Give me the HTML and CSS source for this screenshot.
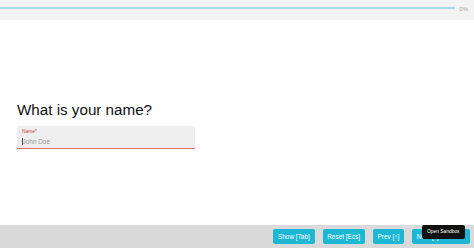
FILE: index.html
```html
<!DOCTYPE html>
<html>
<head>
<meta charset="utf-8">
<link rel="stylesheet" href="styles.css">
</head>
<body>
<div class="page">
  <header class="topbar">
    <div class="progress"></div>
    <span class="percent">0%</span>
  </header>
  <main class="content">
    <h1 class="question">What is your name?</h1>
    <div class="field">
      <label class="field-label">Name*</label>
      <div class="field-input"><span class="caret"></span><span class="placeholder">John Doe</span></div>
    </div>
  </main>
  <footer class="bottombar">
    <button class="btn">Show [Tab]</button>
    <button class="btn">Reset [Ecs]</button>
    <button class="btn">Prev [↑]</button>
    <div class="btn-wrap">
      <button class="btn btn-next">Next [↓]</button>
      <div class="tooltip">Open Sandbox</div>
    </div>
  </footer>
</div>
</body>
</html>
```
FILE: styles.css
```css
html, body {
  margin: 0;
  padding: 0;
  background: #ffffff;
}
body {
  font-family: "Liberation Sans", Arial, sans-serif;
  color: #111;
}
.page {
  width: 474px;
  height: 248px;
  display: flex;
  flex-direction: column;
}
.topbar {
  height: 20px;
  background: #f3f3f3;
  display: flex;
  align-items: flex-start;
  padding-top: 7px;
  box-sizing: border-box;
  gap: 4px;
}
.progress {
  flex: 1;
  height: 2px;
  background: #a9dbe6;
}
.percent {
  font-size: 6px;
  line-height: 4px;
  margin-top: -0.5px;
  color: #a5a5a5;
  margin-right: 6px;
}
.content {
  flex: 1;
  padding: 81px 0 0 17px;
}
.question {
  margin: 0 0 7px 0;
  font-size: 15.2px;
  line-height: 18px;
  font-weight: 400;
  color: #111;
}
.field {
  width: 178px;
  height: 22.5px;
  background: #eeeeee;
  border-bottom: 1.5px solid #d76d6d;
  border-radius: 2px 2px 0 0;
  padding: 3px 0 0 5px;
  box-sizing: border-box;
}
.field-label {
  display: block;
  font-size: 4.9px;
  line-height: 6px;
  color: #c9484a;
}
.field-input {
  display: flex;
  align-items: center;
  margin-top: 2px;
  height: 9px;
}
.caret {
  width: 0.6px;
  height: 7px;
  background: #444;
}
.placeholder {
  font-size: 6.4px;
  color: #9a9a9a;
}
.bottombar {
  height: 23px;
  background: #dadada;
  display: flex;
  align-items: center;
  justify-content: flex-end;
  gap: 8px;
  padding-right: 4px;
}
.btn {
  height: 15px;
  padding: 0 4.7px;
  border: none;
  border-radius: 2px;
  background: #1bb7d4;
  color: #ffffff;
  font-family: "Liberation Sans", Arial, sans-serif;
  font-size: 6.45px;
  line-height: 15px;
  margin: 0;
  white-space: nowrap;
  display: block;
}
.btn-wrap {
  position: relative;
}
.btn-next {
  width: 58px;
  text-align: left;
}
.tooltip {
  position: absolute;
  left: 9.5px;
  top: -4px;
  width: 43.5px;
  height: 14px;
  background: #111111;
  color: #ffffff;
  border-radius: 2px;
  font-size: 4.9px;
  line-height: 13px;
  text-align: center;
  white-space: nowrap;
}
```
